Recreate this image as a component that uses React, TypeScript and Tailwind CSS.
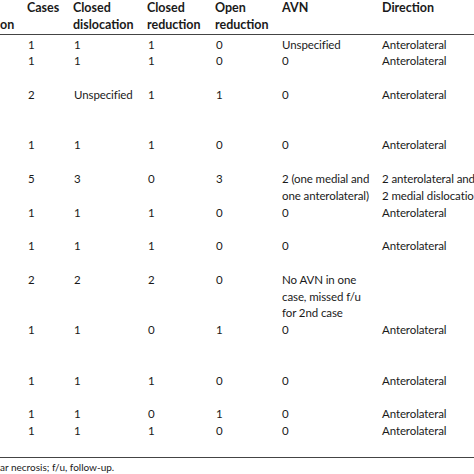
const rows = [
  { lines: 1, cells: ['1', '1', '1', '0', ['Unspecified'], ['Anterolateral']] },
  { lines: 2, cells: ['1', '1', '1', '0', ['0'], ['Anterolateral']] },
  { lines: 3, cells: ['2', 'Unspecified', '1', '1', ['0'], ['Anterolateral']] },
  { lines: 2, cells: ['1', '1', '1', '0', ['0'], ['Anterolateral']] },
  {
    lines: 2,
    cells: ['5', '3', '0', '3', ['2 (one medial and', 'one anterolateral)'], ['2 anterolateral and', '2 medial dislocations']],
  },
  { lines: 2, cells: ['1', '1', '1', '0', ['0'], ['Anterolateral']] },
  { lines: 2, cells: ['1', '1', '1', '0', ['0'], ['Anterolateral']] },
  { lines: 3, cells: ['2', '2', '2', '0', ['No AVN in one', 'case, missed f/u', 'for 2nd case'], []] },
  { lines: 3, cells: ['1', '1', '0', '1', ['0'], ['Anterolateral']] },
  { lines: 2, cells: ['1', '1', '1', '0', ['0'], ['Anterolateral']] },
  { lines: 1, cells: ['1', '1', '0', '1', ['0'], ['Anterolateral']] },
  { lines: 2, cells: ['1', '1', '1', '0', ['0'], ['Anterolateral']] },
];

const heights: Record<number, string> = {
  1: 'h-[16.8px]',
  2: 'h-[33.6px]',
  3: 'h-[50.4px]',
};

const cols = 'grid grid-cols-[27px_46px_74px_68px_67px_100px_120px]';

export default function App() {
  return (
    <div className="w-[474px] h-[474px] overflow-hidden bg-white text-[#1a1a1a] font-['Lato',sans-serif]">
      <div className="w-[502px]">
        {/* header */}
        <div className={`${cols} text-[12.5px] leading-[16.8px] font-bold border-b border-[#444]`}>
          <div className="flex flex-col justify-end">
            <span>on</span>
          </div>
          <div>Cases</div>
          <div>
            Closed
            <br />
            dislocation
          </div>
          <div>
            Closed
            <br />
            reduction
          </div>
          <div>
            Open
            <br />
            reduction
          </div>
          <div>AVN</div>
          <div>Direction</div>
        </div>

        {/* body */}
        <div className="pt-[2px] border-b border-[#444] text-[11.5px] leading-[16.8px] tracking-[-0.1px]">
          {rows.map((r, i) => (
            <div key={i} className={`${cols} ${heights[r.lines]}`}>
              <div />
              {r.cells.map((c, j) =>
                Array.isArray(c) ? (
                  <div key={j} className="flex flex-col whitespace-nowrap">
                    {c.map((l, k) => (
                      <span key={k}>{l}</span>
                    ))}
                  </div>
                ) : (
                  <div key={j} className="pl-[1px]">
                    {c}
                  </div>
                ),
              )}
            </div>
          ))}
        </div>

        {/* footnote */}
        <div className="pt-[3px] text-[10px] leading-[12px] whitespace-nowrap">ar necrosis; f/u, follow-up.</div>
      </div>
    </div>
  );
}
